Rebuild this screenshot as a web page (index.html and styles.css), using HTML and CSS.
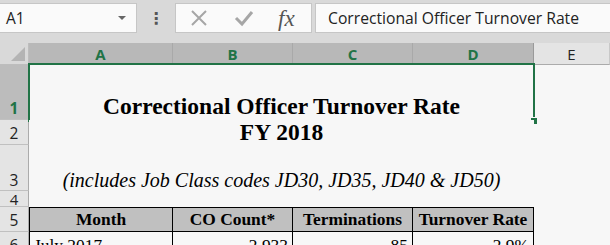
FILE: index.html
```html
<!DOCTYPE html>
<html>
<head>
<meta charset="utf-8">
<link rel="stylesheet" href="styles.css">
</head>
<body>
<div class="toolbar">
  <div class="namebox"><span>A1</span><span class="dd"></span></div>
  <div class="dots">⋮</div>
  <div class="btns">
    <svg class="ico" width="18" height="18" viewBox="0 0 18 18"><path d="M2 2 L16 16 M16 2 L2 16" stroke="#a6a6a6" stroke-width="2" fill="none"/></svg>
    <svg class="ico" width="20" height="18" viewBox="0 0 20 18"><path d="M2 9 L8 15 L18 3" stroke="#a6a6a6" stroke-width="3" fill="none"/></svg>
    <span class="fx">fx</span>
  </div>
  <div class="formula">Correctional Officer Turnover Rate</div>
</div>
<div class="sheet">
  <div class="corner"><span class="tri"></span></div>
  <div class="ch sel">A</div>
  <div class="ch sel">B</div>
  <div class="ch sel">C</div>
  <div class="ch sel last">D</div>
  <div class="ch">E</div>

  <div class="rh selr r1">1</div>
  <div class="cell title r1 span4">Correctional Officer Turnover Rate
    <div class="selbox"><span class="handle"></span></div>
  </div>
  <div class="cell r1"></div>

  <div class="rh r2">2</div>
  <div class="cell title r2 span4 top">FY 2018</div>
  <div class="cell r2"></div>

  <div class="rh r3">3</div>
  <div class="cell sub r3 span4">(includes Job Class codes JD30, JD35, JD40 &amp; JD50)</div>
  <div class="cell r3"></div>

  <div class="rh r4">4</div>
  <div class="cell r4 span4"></div>
  <div class="cell r4"></div>

  <div class="rh r5">5</div>
  <div class="cell th first">Month</div>
  <div class="cell th">CO Count*</div>
  <div class="cell th">Terminations</div>
  <div class="cell th">Turnover Rate</div>
  <div class="cell"></div>

  <div class="rh r6">6</div>
  <div class="cell td first left">July 2017</div>
  <div class="cell td">2,933</div>
  <div class="cell td">85</div>
  <div class="cell td">2.9%</div>
  <div class="cell"></div>
</div>
</body>
</html>
```
FILE: styles.css
```css
html, body {
  margin: 0;
  padding: 0;
  width: 610px;
  height: 245px;
  overflow: hidden;
  background: #f7f7f7;
}
.toolbar {
  height: 43px;
  background: #d9d9d9;
  display: flex;
  align-items: flex-start;
  padding-top: 3px;
  box-sizing: border-box;
  font-family: "Open Sans", "DejaVu Sans", sans-serif;
}
.namebox {
  width: 137px;
  height: 30px;
  box-sizing: border-box;
  background: #fafafa;
  border: 1px solid #c6c6c6;
  border-left: none;
  display: flex;
  align-items: center;
  justify-content: space-between;
  padding: 0 10px 0 6px;
  font-size: 15.5px;
  color: #222;
}
.dd {
  width: 0;
  height: 0;
  border-left: 4px solid transparent;
  border-right: 4px solid transparent;
  border-top: 4px solid #666;
}
.dots {
  width: 38px;
  text-align: center;
  font-size: 16px;
  line-height: 30px;
  color: #555;
  font-weight: bold;
}
.btns {
  width: 137px;
  height: 30px;
  box-sizing: border-box;
  background: #fafafa;
  border: 1px solid #c6c6c6;
  display: flex;
  align-items: center;
  padding-left: 14px;
  gap: 26px;
}
.fx {
  font-family: "Liberation Serif", serif;
  font-style: italic;
  font-size: 23px;
  color: #555;
  margin-left: -2px;
  line-height: 1;
}
.formula {
  margin-left: 3px;
  flex: 1;
  height: 30px;
  box-sizing: border-box;
  background: #fafafa;
  border: 1px solid #c6c6c6;
  border-right: none;
  font-size: 15.7px;
  line-height: 28px;
  padding-left: 12px;
  color: #222;
}
.sheet {
  display: grid;
  grid-template-columns: 29px 144px 120px 120px 121px 76px;
  grid-template-rows: 22px 55px 25px 46px 16px 25px 25px;
  font-family: "Liberation Serif", serif;
}
.corner {
  background: #d9d9d9;
  border-right: 1px solid #bdbdbd;
  border-bottom: 1px solid #bdbdbd;
  box-sizing: border-box;
  position: relative;
}
.tri {
  position: absolute;
  right: 3px;
  bottom: 3px;
  width: 0;
  height: 0;
  border-left: 14px solid transparent;
  border-bottom: 14px solid #b4b4b4;
}
.ch {
  background: #e4e4e4;
  border-right: 1px solid #c8c8c8;
  border-bottom: 1px solid #ababab;
  box-sizing: border-box;
  text-align: center;
  font-family: "Open Sans", "DejaVu Sans", sans-serif;
  font-size: 15px;
  line-height: 22px;
  color: #222;
}
.ch.sel {
  background: #b8b8b8;
  border-right: 1px solid #a9a9a9;
  border-bottom: 2px solid #217346;
  color: #217346;
  font-weight: bold;
}
.ch.last { border-right: 1px solid #9a9a9a; }
.rh {
  background: #e4e4e4;
  border-right: 1px solid #ababab;
  border-bottom: 1px solid #c0c0c0;
  box-sizing: border-box;
  display: flex;
  align-items: flex-end;
  justify-content: center;
  overflow: hidden;
  font-family: "Open Sans", "DejaVu Sans", sans-serif;
  font-size: 15.5px;
  line-height: 21px;
  color: #222;
}
.rh.r3 { line-height: 19px; }
.rh.selr {
  background: #bcbcbc;
  color: #217346;
  font-weight: bold;
}
.rh.r4 { font-size: 15px; line-height: 14px; }
.cell {
  background: #f7f7f7;
  box-sizing: border-box;
}
.span4 { grid-column: span 4; }
.title {
  position: relative;
  font-weight: bold;
  font-size: 23.5px;
  text-align: center;
  display: flex;
  align-items: flex-end;
  justify-content: center;
  line-height: 26px;
  color: #000;
}
.title.r1 { padding-bottom: 1px; }
.title.top { align-items: flex-start; line-height: 24px; }
.sub {
  font-style: italic;
  font-size: 20px;
  display: flex;
  align-items: flex-end;
  justify-content: center;
  line-height: 22px;
  color: #000;
}
.selbox {
  position: absolute;
  left: -1px;
  top: -2px;
  right: -1px;
  bottom: -2px;
  border: 2px solid #217346;
  pointer-events: none;
}
.handle {
  position: absolute;
  right: -5px;
  bottom: -5px;
  width: 6px;
  height: 6px;
  background: #217346;
  border: 1px solid #f7f7f7;
}
.th {
  background: #c0c0c0;
  border-top: 1px solid #000;
  border-right: 1px solid #000;
  border-bottom: 1px solid #000;
  text-align: center;
  font-weight: bold;
  font-size: 17.4px;
  line-height: 23px;
  color: #000;
}
.first { border-left: 1px solid #000; }
.td {
  border-right: 1px solid #000;
  text-align: right;
  font-size: 17.4px;
  line-height: 26px;
  padding-right: 4px;
  color: #000;
}
.td.left { text-align: left; padding-left: 4px; }
```
